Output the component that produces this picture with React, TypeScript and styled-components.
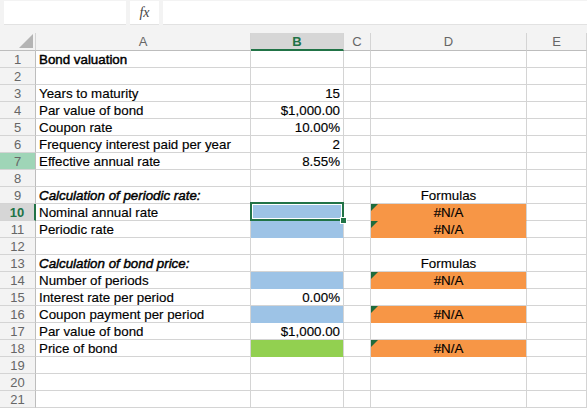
import styled, { createGlobalStyle, css } from "styled-components";

const GlobalStyle = createGlobalStyle`
  body {
    margin: 0;
    background: #fff;
    font-family: "Liberation Sans", Arial, sans-serif;
  }
`;

const GREEN = "#217346";
const GRID = "#d4d4d4";

const fills: Record<string, string> = {
  blue: "#9dc3e6",
  orange: "#f79646",
  green: "#92d050",
};

const TopBar = styled.div`
  height: 33px;
  background: #f3f3f3;
  box-sizing: border-box;
  display: flex;
  align-items: flex-start;
  gap: 4px;
  padding: 1px 0 0 4px;
`;

const Box = styled.div<{ $width?: string }>`
  height: 23px;
  background: #fff;
  width: ${(p) => p.$width || "auto"};
  flex: ${(p) => (p.$width ? "none" : "1")};
  display: flex;
  align-items: center;
  justify-content: center;
  border-bottom: 1px solid #e2e2e2;
`;

const Fx = styled.span`
  font-family: "Liberation Serif", "Times New Roman", serif;
  font-style: italic;
  font-size: 14px;
  color: #444;
`;

const Sheet = styled.div`
  display: grid;
  grid-template-columns: 36px 215px 93px 27px 156px 60px;
  grid-template-rows: 18px;
  grid-auto-rows: 17px;
  font-size: 13.33px;
  color: #000;
`;

const Corner = styled.div`
  background: #f3f3f3;
  border-bottom: 1px solid #bdbdbd;
  border-right: 1px solid #d4d4d4;
  box-sizing: border-box;
  position: relative;

  &::after {
    content: "";
    position: absolute;
    right: 2px;
    bottom: 2px;
    border-style: solid;
    border-width: 0 0 14px 14px;
    border-color: transparent transparent #b4b4b4 transparent;
  }
`;

const ColHead = styled.div<{ $active?: boolean }>`
  box-sizing: border-box;
  background: ${(p) => (p.$active ? "#d6d6d6" : "#f3f3f3")};
  border-right: 1px solid ${GRID};
  border-bottom: ${(p) => (p.$active ? `2px solid ${GREEN}` : "1px solid #bdbdbd")};
  color: ${(p) => (p.$active ? GREEN : "#666")};
  font-weight: ${(p) => (p.$active ? "bold" : "normal")};
  font-size: 13px;
  display: flex;
  align-items: center;
  justify-content: center;
`;

const RowHead = styled.div<{ $active?: boolean; $hl?: boolean }>`
  box-sizing: border-box;
  background: ${(p) => (p.$active ? "#d6d6d6" : p.$hl ? "#9fd5b7" : "#f3f3f3")};
  border-bottom: 1px solid ${GRID};
  border-right: ${(p) => (p.$active ? `2px solid ${GREEN}` : "1px solid #bdbdbd")};
  color: ${(p) => (p.$active ? GREEN : "#666")};
  font-weight: ${(p) => (p.$active ? "bold" : "normal")};
  font-size: 13px;
  text-align: center;
  padding-top: 2px;
  line-height: 14px;
`;

const Cell = styled.div<{
  $align?: "left" | "right" | "center";
  $bold?: boolean;
  $italic?: boolean;
  $fill?: string;
  $flag?: boolean;
  $selected?: boolean;
}>`
  box-sizing: border-box;
  position: relative;
  padding: 2px 3px 0;
  line-height: 14px;
  white-space: nowrap;
  text-align: ${(p) => p.$align || "left"};
  font-style: ${(p) => (p.$italic ? "italic" : "normal")};
  -webkit-text-stroke: ${(p) => (p.$bold ? "0.45px #000" : "0.15px #000")};
  background: ${(p) => (p.$fill ? fills[p.$fill] : "#fff")};
  border-right: 1px solid ${GRID};
  border-bottom: 1px solid ${(p) => (p.$fill ? fills[p.$fill] : GRID)};

  ${(p) =>
    p.$flag &&
    css`
      &::before {
        content: "";
        position: absolute;
        left: 0;
        top: 0;
        border-style: solid;
        border-width: 7px 7px 0 0;
        border-color: #1e6b3c transparent transparent transparent;
      }
    `}

  ${(p) =>
    p.$selected &&
    css`
      &::after {
        content: "";
        position: absolute;
        left: -1px;
        top: -2px;
        right: -1px;
        bottom: -1px;
        border: 2px solid ${GREEN};
        box-shadow: inset 0 0 0 1px #fff;
        z-index: 1;
      }
      &::before {
        content: "";
        position: absolute;
        right: -4px;
        bottom: -4px;
        width: 5px;
        height: 5px;
        background: ${GREEN};
        border: 1px solid #fff;
        z-index: 2;
      }
    `}
`;

type CellDef = {
  text?: string;
  align?: "left" | "right" | "center";
  bold?: boolean;
  italic?: boolean;
  fill?: string;
  flag?: boolean;
  selected?: boolean;
};

type RowDef = { a?: CellDef; b?: CellDef; d?: CellDef };

const num = (text: string): CellDef => ({ text, align: "right" });
const na: CellDef = { text: "#N/A", align: "center", fill: "orange", flag: true };
const formulas: CellDef = { text: "Formulas", align: "center" };

const rows: RowDef[] = [
  { a: { text: "Bond valuation", bold: true } },
  {},
  { a: { text: "Years to maturity" }, b: num("15") },
  { a: { text: "Par value of bond" }, b: num("$1,000.00") },
  { a: { text: "Coupon rate" }, b: num("10.00%") },
  { a: { text: "Frequency interest paid per year" }, b: num("2") },
  { a: { text: "Effective annual rate" }, b: num("8.55%") },
  {},
  { a: { text: "Calculation of periodic rate:", bold: true, italic: true }, d: formulas },
  { a: { text: "Nominal annual rate" }, b: { fill: "blue", selected: true }, d: na },
  { a: { text: "Periodic rate" }, b: { fill: "blue" }, d: na },
  {},
  { a: { text: "Calculation of bond price:", bold: true, italic: true }, d: formulas },
  { a: { text: "Number of periods" }, b: { fill: "blue" }, d: na },
  { a: { text: "Interest rate per period" }, b: num("0.00%") },
  { a: { text: "Coupon payment per period" }, b: { fill: "blue" }, d: na },
  { a: { text: "Par value of bond" }, b: num("$1,000.00") },
  { a: { text: "Price of bond" }, b: { fill: "green" }, d: na },
  {},
  {},
  {},
];

const renderCell = (c: CellDef | undefined, key: string) => (
  <Cell
    key={key}
    $align={c?.align}
    $bold={c?.bold}
    $italic={c?.italic}
    $fill={c?.fill}
    $flag={c?.flag}
    $selected={c?.selected}
  >
    {c?.text}
  </Cell>
);

const App = () => {
  return (
    <>
      <GlobalStyle />
      <TopBar>
        <Box $width="122px" />
        <Box $width="29px">
          <Fx>fx</Fx>
        </Box>
        <Box />
      </TopBar>
      <Sheet>
        <Corner />
        {["A", "B", "C", "D", "E"].map((l) => (
          <ColHead key={l} $active={l === "B"}>
            {l}
          </ColHead>
        ))}
        {rows.map((r, i) => {
          const n = i + 1;
          return [
            <RowHead key={`h${n}`} $active={n === 10} $hl={n === 7}>
              {n}
            </RowHead>,
            renderCell(r.a, `a${n}`),
            renderCell(r.b, `b${n}`),
            renderCell(undefined, `c${n}`),
            renderCell(r.d, `d${n}`),
            renderCell(undefined, `e${n}`),
          ];
        })}
      </Sheet>
    </>
  );
};

export default App;
